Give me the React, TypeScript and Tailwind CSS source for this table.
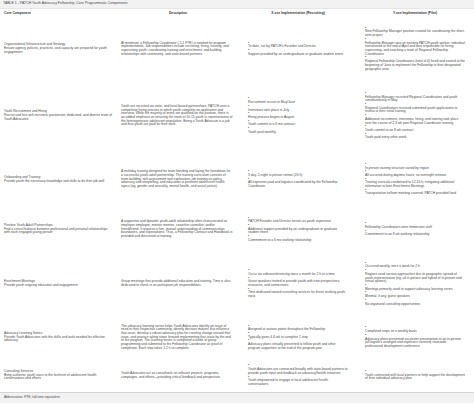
const rows = [
  {
    h: "h-[62px]",
    title: "Organizational Infrastructure and Strategy",
    goal: "Ensure agency policies, practices, and capacity are prepared for youth engagement",
    desc: "At minimum, a Fellowship Coordinator (.5-1 FTE) is needed for program implementation. Job responsibilities include recruiting, hiring, training, and supervising youth; coordinating training and enrichment; and building relationships with community- and state-based partners.",
    recruiting: [
      "To date, run by PATCH's Founder and Director",
      "Support provided by an undergraduate or graduate student intern",
    ],
    pilot: [
      "New Fellowship Manager position created for coordinating the short-term project",
      "Fellowship Manager was an existing PATCH youth worker; individual transitioned at the end of April and was responsible for hiring, supervising, and coaching a team of Regional Fellowship Coordinators",
      "Regional Fellowship Coordinators (total of 4) hired and trained at the beginning of June to implement the Fellowship in their designated geographic area",
    ],
  },
  {
    h: "h-[72px]",
    title: "Youth Recruitment and Hiring",
    goal: "Recruit and hire self-recruited, passionate, dedicated, and diverse team of Youth Advocates",
    desc: "Youth are recruited via state- and local-based partnerships. PATCH uses a competitive hiring process in which youth complete an application and interview. While the majority of teens are qualified for the position, there is an added emphasis on ensuring the team of 10-15 youth is representative of the heterogeneous adolescent population. Being a Youth Advocate is a job and thus youth are paid for their work.",
    recruiting: [
      "Recruitment occurs in May/June",
      "Interviews take place in July",
      "Hiring process begins in August",
      "Youth commit to a 6 mo contract",
      "Youth paid monthly",
    ],
    pilot: [
      "Fellowship Manager recruited Regional Coordinators and youth simultaneously in May",
      "Regional Coordinators received submitted youth applications to review at their initial training",
      "Additional recruitment, interviews, hiring, and training took place over the course of 2-3 wk post Regional Coordinator training",
      "Youth commit to an 8 wk contract",
      "Youth paid every other week",
    ],
  },
  {
    h: "h-[55px]",
    title: "Onboarding and Training",
    goal: "Provide youth the necessary knowledge and skills to do their job well",
    desc: "A multiday training designed for team bonding and laying the foundation for a successful youth-adult partnership. The training curriculum consists of team building, self-assessment and exploration, job training on policy, advocacy and storytelling, and education in pertinent adolescent health topics (eg, gender and sexuality, mental health, and social justice).",
    recruiting: [
      "3 day, 2-night in-person retreat (20 h)",
      "All expenses paid and logistics coordinated by the Fellowship Coordinator",
    ],
    pilot: [
      "In-person training structure varied by region",
      "All occurred during daytime hours; no overnight retreats",
      "Training curricula condensed to 12-16 h, relegating additional information to later Enrichment Meetings",
      "Transportation to/from meeting covered; PATCH provided food",
    ],
  },
  {
    h: "h-[45px]",
    title: "Positive Youth-Adult Partnerships",
    goal: "Find a critical balance between professional and personal relationships with each engaged young person",
    desc: "A supportive and dynamic youth-adult relationship often characterized as employer-employee, mentor-mentee, coworker-coworker, and/or friend/friend. It requires a firm, mutual understanding of communication, boundaries, and expectations. Thus, a Fellowship Contract and Handbook is provided and discussed at training.",
    recruiting: [
      "PATCH Founder and Director serves as youth supervisor",
      "Additional support provided by an undergraduate or graduate student intern",
      "Commitment to a 6 mo working relationship",
    ],
    pilot: [
      "Fellowship Coordinators were Immersion staff",
      "Commitment to an 8 wk working relationship",
    ],
  },
  {
    h: "h-[64px]",
    title: "Enrichment Meetings",
    goal: "Provide youth ongoing education and engagement",
    desc: "Group meetings that provide additional education and training. Time is also dedicated to check in on participant job responsibilities.",
    recruiting: [
      "Occur via videoconferencing twice a month for 2 h at a time",
      "Guest speakers invited to provide youth with new perspectives, resources, and connections",
      "Time dedicated toward consulting services for those seeking youth input",
    ],
    pilot: [
      "Occurred weekly, once a week for 2 h",
      "Regions used various approaches due to geographic spread of youth representation (eg, all in-person and hybrid of in-person and virtual options)",
      "Meetings primarily used to support advocacy learning series",
      "Minimal, if any, guest speakers",
      "No organized consulting opportunities",
    ],
  },
  {
    h: "h-[43px]",
    title: "Advocacy Learning Series",
    goal: "Provide Youth Advocates with the skills and tools needed for effective advocacy",
    desc: "The advocacy learning series helps Youth Advocates identify an issue of need in their respective community, identify decision makers that influence that issue, develop a robust advocacy plan for creating change around that issue, and practice taking steps forward implementing that issue by the end of the program. The learning series is completed outside of group programming and submitted to the Fellowship Coordinator as proof of completion. Each step takes 1-2 h to complete.",
    recruiting: [
      "Assigned at various points throughout the Fellowship",
      "Typically given 4-6 wk to complete 1 step",
      "Advocacy plans virtually presented to fellow youth and other program supporters at the end of the program year",
    ],
    pilot: [
      "Completed steps on a weekly basis",
      "Advocacy plans presented via poster presentation at an in-person (all logistics arranged and expenses covered) statewide, professional development conference",
    ],
  },
  {
    h: "h-[33px]",
    title: "Consulting Services",
    goal: "Bring authentic youth voice to the forefront of adolescent health conversations and efforts",
    desc: "Youth Advocates act as consultants on relevant projects, programs, campaigns, and efforts\u2014providing critical feedback and perspective.",
    recruiting: [
      "Youth Advocates are connected broadly with state-based partners to provide youth input and feedback on advocacy/health initiatives",
      "Youth empowered to engage in local adolescent health conversations",
    ],
    pilot: [
      "Youth connected with local partners to help support the development of their individual advocacy plan",
    ],
  },
];

function Bullets({ items }: { items: string[] }) {
  return (
    <div className="flex flex-col">
      {items.map((t) => (
        <div key={t}>
          <div>•</div>
          <div>{t}</div>
        </div>
      ))}
    </div>
  );
}

export default function App() {
  return (
    <div className="h-[403px] w-[474px] overflow-hidden bg-white font-['Liberation_Sans',Arial,sans-serif] text-[3.3px] leading-[3.7px] text-[#4a4a4a]">
      <div className="flex h-[9px] items-center border-b border-[#e6e6e6] bg-[#f2f2f2] pl-[3px] text-[3.5px]">
        TABLE 1 - PATCH Youth Advocacy Fellowship, Core Programmatic Components
      </div>

      <div className="grid h-[9px] grid-cols-[118px_127px_117px_1fr] items-center font-bold text-[#333]">
        <div className="pl-[4px]">Core Component</div>
        <div className="pl-[3px] pr-[10px] text-center">Description</div>
        <div className="pl-[3px] pr-[14px] text-center">X-xxx Implementation (Recruiting)</div>
        <div className="pl-[3px] pr-[9px] text-center">Y-xxx Implementation (Pilot)</div>
      </div>

      {rows.map((r) => (
        <div key={r.title} className={`grid grid-cols-[118px_127px_117px_1fr] items-center ${r.h}`}>
          <div className="pl-[4px] pr-[6px]">
            <div>{r.title}</div>
            <div>{r.goal}</div>
          </div>
          <div className="pl-[3px] pr-[12px]">{r.desc}</div>
          <div className="pl-[3px] pr-[14px]">
            <Bullets items={r.recruiting} />
          </div>
          <div className="pl-[3px] pr-[9px]">
            <Bullets items={r.pilot} />
          </div>
        </div>
      ))}

      <div className="flex h-[11px] items-center border-t border-[#d4d4d4] bg-[#f2f2f2] pl-[4px]">
        Abbreviation: FTE, full-time equivalent
      </div>
    </div>
  );
}
